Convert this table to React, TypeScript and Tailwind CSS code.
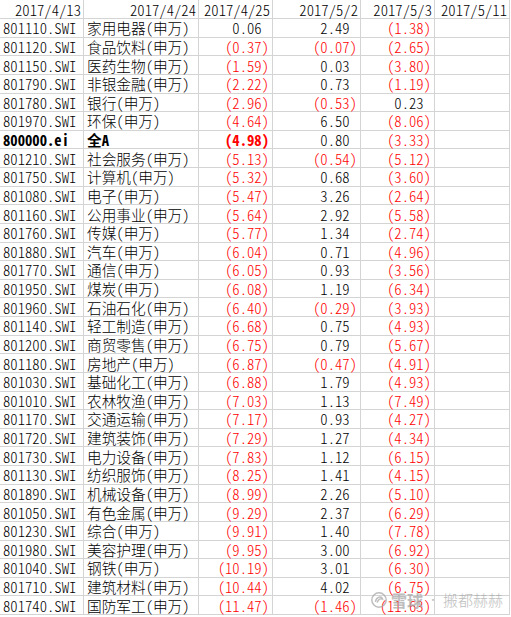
const dates = ["2017/4/13", "2017/4/24", "2017/4/25", "2017/5/2", "2017/5/3", "2017/5/11"]

type Row = { code: string; name: string; a: string; b: string; c: string; bold?: boolean }

const rows: Row[] = [
  { code: "801110.SWI", name: "家用电器(申万)", a: "0.06", b: "2.49", c: "(1.38)" },
  { code: "801120.SWI", name: "食品饮料(申万)", a: "(0.37)", b: "(0.07)", c: "(2.65)" },
  { code: "801150.SWI", name: "医药生物(申万)", a: "(1.59)", b: "0.03", c: "(3.80)" },
  { code: "801790.SWI", name: "非银金融(申万)", a: "(2.22)", b: "0.73", c: "(1.19)" },
  { code: "801780.SWI", name: "银行(申万)", a: "(2.96)", b: "(0.53)", c: "0.23" },
  { code: "801970.SWI", name: "环保(申万)", a: "(4.64)", b: "6.50", c: "(8.06)" },
  { code: "800000.ei", name: "全A", a: "(4.98)", b: "0.80", c: "(3.33)", bold: true },
  { code: "801210.SWI", name: "社会服务(申万)", a: "(5.13)", b: "(0.54)", c: "(5.12)" },
  { code: "801750.SWI", name: "计算机(申万)", a: "(5.32)", b: "0.68", c: "(3.60)" },
  { code: "801080.SWI", name: "电子(申万)", a: "(5.47)", b: "3.26", c: "(2.64)" },
  { code: "801160.SWI", name: "公用事业(申万)", a: "(5.64)", b: "2.92", c: "(5.58)" },
  { code: "801760.SWI", name: "传媒(申万)", a: "(5.77)", b: "1.34", c: "(2.74)" },
  { code: "801880.SWI", name: "汽车(申万)", a: "(6.04)", b: "0.71", c: "(4.96)" },
  { code: "801770.SWI", name: "通信(申万)", a: "(6.05)", b: "0.93", c: "(3.56)" },
  { code: "801950.SWI", name: "煤炭(申万)", a: "(6.08)", b: "1.19", c: "(6.34)" },
  { code: "801960.SWI", name: "石油石化(申万)", a: "(6.40)", b: "(0.29)", c: "(3.93)" },
  { code: "801140.SWI", name: "轻工制造(申万)", a: "(6.68)", b: "0.75", c: "(4.93)" },
  { code: "801200.SWI", name: "商贸零售(申万)", a: "(6.75)", b: "0.79", c: "(5.67)" },
  { code: "801180.SWI", name: "房地产(申万)", a: "(6.87)", b: "(0.47)", c: "(4.91)" },
  { code: "801030.SWI", name: "基础化工(申万)", a: "(6.88)", b: "1.79", c: "(4.93)" },
  { code: "801010.SWI", name: "农林牧渔(申万)", a: "(7.03)", b: "1.13", c: "(7.49)" },
  { code: "801170.SWI", name: "交通运输(申万)", a: "(7.17)", b: "0.93", c: "(4.27)" },
  { code: "801720.SWI", name: "建筑装饰(申万)", a: "(7.29)", b: "1.27", c: "(4.34)" },
  { code: "801730.SWI", name: "电力设备(申万)", a: "(7.83)", b: "1.12", c: "(6.15)" },
  { code: "801130.SWI", name: "纺织服饰(申万)", a: "(8.25)", b: "1.41", c: "(4.15)" },
  { code: "801890.SWI", name: "机械设备(申万)", a: "(8.99)", b: "2.26", c: "(5.10)" },
  { code: "801050.SWI", name: "有色金属(申万)", a: "(9.29)", b: "2.37", c: "(6.29)" },
  { code: "801230.SWI", name: "综合(申万)", a: "(9.91)", b: "1.40", c: "(7.78)" },
  { code: "801980.SWI", name: "美容护理(申万)", a: "(9.95)", b: "3.00", c: "(6.92)" },
  { code: "801040.SWI", name: "钢铁(申万)", a: "(10.19)", b: "3.01", c: "(6.30)" },
  { code: "801710.SWI", name: "建筑材料(申万)", a: "(10.44)", b: "4.02", c: "(6.75)" },
  { code: "801740.SWI", name: "国防军工(申万)", a: "(11.47)", b: "(1.46)", c: "(11.63)" },
]

// accounting format: negatives red in parens, positives keep room for the ")"
function Num({ v, bold }: { v: string; bold?: boolean }) {
  const neg = v.startsWith("(")
  return (
    <div className="flex items-center justify-end pr-[3px] border-r border-b border-[#d4d4d4] h-[18.64px]">
      <span className={(neg ? "text-[#ff0000]" : "text-black") + (bold ? " font-bold" : "")}>
        {v}
        {!neg && <span className="invisible">)</span>}
      </span>
    </div>
  )
}

export default function App() {
  return (
    <div className="relative w-[511px] h-[617px] bg-white overflow-hidden font-['Noto_Sans_CJK_SC',sans-serif] font-light text-[14.67px] leading-[17px] text-black [font-feature-settings:'hwid']">
      <div className="grid grid-cols-[84px_115px_74px_88px_74px_75px]">
        {/* header */}
        {dates.map((d) => (
          <div key={d} className="flex items-center justify-end pr-[2px] border-r border-b border-[#d4d4d4] h-[19px]">
            {d}
          </div>
        ))}
        {rows.map((r) => (
          <div key={r.code} className="contents">
            <div className={"flex items-center pl-[3px] border-r border-b border-[#d4d4d4] h-[18.64px] whitespace-nowrap" + (r.bold ? " font-bold" : "")}>
              {r.code}
            </div>
            <div className={"flex items-center pl-[3px] border-r border-b border-[#d4d4d4] h-[18.64px] whitespace-nowrap" + (r.bold ? " font-bold" : "")}>
              {r.name}
            </div>
            <Num v={r.a} bold={r.bold} />
            <Num v={r.b} />
            <Num v={r.c} />
            <div className="border-r border-b border-[#d4d4d4] h-[18.64px]" />
          </div>
        ))}
      </div>

      {/* watermark */}
      <div className="absolute left-[370px] top-[591px] flex items-center gap-[3px] whitespace-nowrap text-[#a8a8a8] opacity-75 pointer-events-none leading-[18px] [font-feature-settings:normal]">
        <svg width="18" height="18" viewBox="0 0 20 20" fill="none" stroke="#a8a8a8" strokeWidth="1.6">
          <circle cx="10" cy="10" r="8" />
          <path d="M6 12 C7 6, 13 5, 14 9 C 12 8, 9 9, 8 13" />
        </svg>
        <span className="text-[16px] font-bold">雪球</span>
        <span className="text-[10px] px-[2px]">·</span>
        <span className="text-[15px]">搬都赫赫</span>
      </div>
    </div>
  )
}
